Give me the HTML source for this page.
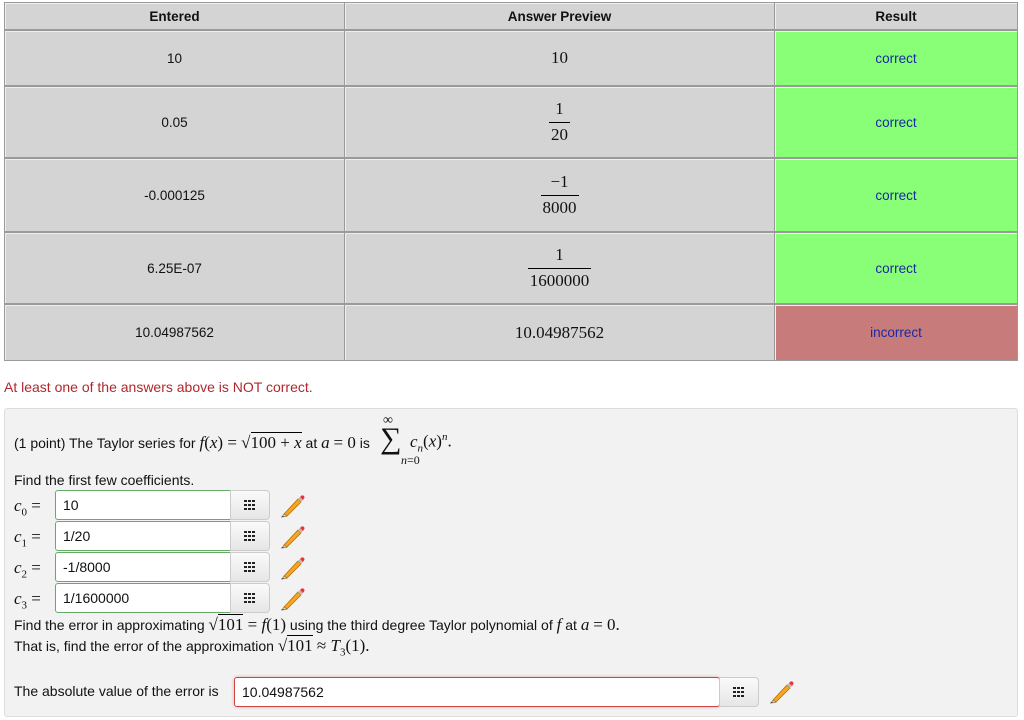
<!DOCTYPE html>
<html><head><style>
body{margin:0;width:1024px;height:720px;background:#fff;font-family:"Liberation Sans",sans-serif;font-size:13px;color:#111;position:relative;overflow:hidden}
.c{position:absolute;background:#d4d4d4;border:1px solid #9a9a9a;box-shadow:inset 1px 1px 0 #eee;box-sizing:border-box;display:flex;align-items:center;justify-content:center;text-align:center;font-size:13.5px}
.g{background:#88ff77}.r{background:#c87b7b}
.h{font-weight:bold}
.res{color:#1a2aa0}
.m{font-family:"Liberation Serif",serif;font-size:17px}
.fr{display:inline-block;text-align:center;font-family:"Liberation Serif",serif;font-size:17px}
.fr span{display:block;padding:0 2px}
.fr .n{border-bottom:1px solid #000;padding-bottom:3px;margin-bottom:2px}
.a{position:absolute;white-space:nowrap}
.in{position:absolute;left:50px;width:176px;height:30px;border:1px solid #6a6;border-radius:3px 0 0 3px;background:#fff;box-sizing:border-box;padding:6px 7px;font-size:14px}
.bt{position:absolute;left:225px;width:40px;height:30px;border:1px solid #ccc;border-radius:0 4px 4px 0;background:linear-gradient(#fafafa,#e6e6e6);box-sizing:border-box}
.grid{position:absolute;left:13px;top:9px;width:12px;height:10px;background:
repeating-linear-gradient(90deg,#222 0 3px,transparent 3px 4px);-webkit-mask:repeating-linear-gradient(#000 0 2px,transparent 2px 4px);mask:repeating-linear-gradient(#000 0 2px,transparent 2px 4px)}
.mi{font-family:"Liberation Serif",serif;font-style:italic;font-size:17px}
.t{font-size:14px}
.p{position:absolute;width:26px;height:26px}
</style></head><body>
<svg width="0" height="0" style="position:absolute"><defs>
<symbol id="pen" viewBox="0 0 26 26">
<path d="M2 24 L8 23" stroke="#999" stroke-width="1.5" opacity=".6"/>
<path d="M5 21 L19 6 L22 9 L8 23 Z" fill="#f5a623" stroke="#b86e00" stroke-width="0.8"/>
<path d="M5 21 L8 23 L3 24 Z" fill="#f3d9a8" stroke="#8a6a3a" stroke-width="0.6"/>
<path d="M3 24 L4 22.5 L4.8 23.6 Z" fill="#333"/>
<path d="M19 6 L21 4 L24 7 L22 9 Z" fill="#bbb"/>
<path d="M21 4 L22.5 2.5 Q24 2 25 3 Q26 4.5 25 5.5 L24 7 Z" fill="#e33"/>
</symbol></defs></svg>
<div class="c h" style="left:4px;top:2px;width:341px;height:28px">Entered</div>
<div class="c h" style="left:344px;top:2px;width:431px;height:28px">Answer Preview</div>
<div class="c h" style="left:774px;top:2px;width:244px;height:28px">Result</div>

<div class="c" style="left:4px;top:30px;width:341px;height:56px">10</div>
<div class="c" style="left:344px;top:30px;width:431px;height:56px"><span class="m">10</span></div>
<div class="c g res" style="left:774px;top:30px;width:244px;height:56px">correct</div>

<div class="c" style="left:4px;top:86px;width:341px;height:72px">0.05</div>
<div class="c" style="left:344px;top:86px;width:431px;height:72px"><div class="fr"><span class="n">1</span><span>20</span></div></div>
<div class="c g res" style="left:774px;top:86px;width:244px;height:72px">correct</div>

<div class="c" style="left:4px;top:158px;width:341px;height:74px">-0.000125</div>
<div class="c" style="left:344px;top:158px;width:431px;height:74px"><div class="fr"><span class="n">&minus;1</span><span>8000</span></div></div>
<div class="c g res" style="left:774px;top:158px;width:244px;height:74px">correct</div>

<div class="c" style="left:4px;top:232px;width:341px;height:72px">6.25E-07</div>
<div class="c" style="left:344px;top:232px;width:431px;height:72px"><div class="fr"><span class="n">1</span><span>1600000</span></div></div>
<div class="c g res" style="left:774px;top:232px;width:244px;height:72px">correct</div>

<div class="c" style="left:4px;top:304px;width:341px;height:57px">10.04987562</div>
<div class="c" style="left:344px;top:304px;width:431px;height:57px"><span class="m">10.04987562</span></div>
<div class="c r res" style="left:774px;top:304px;width:244px;height:57px">incorrect</div>

<div class="a" style="left:4px;top:379px;color:#b0282d;font-size:14px">At least one of the answers above is NOT correct.</div>

<div style="position:absolute;left:4px;top:408px;width:1014px;height:309px;background:#f2f2f2;border:1px solid #ddd;border-radius:3px;box-sizing:border-box">
<div class="a t" style="left:9px;top:24px">(1 point) The Taylor series for <span class="mi">f</span><span class="m">(<i>x</i>) = √<span style="border-top:1px solid #000">100 + <i>x</i></span></span> at <span class="mi">a</span> <span class="m">= 0</span> is</div>
<div class="a m" style="left:375px;top:15px;font-size:30px;line-height:30px">∑</div>
<div class="a m" style="left:405px;top:22px"><i>c<sub style="font-size:11px">n</sub></i>(<i>x</i>)<sup style="font-size:11px"><i>n</i></sup>.</div>
<div class="a m" style="left:378px;top:4px;font-size:14px">∞</div>
<div class="a mi" style="left:396px;top:44px;font-size:12px">n<span style="font-style:normal">=0</span></div>
<div class="a t" style="left:9px;top:63px">Find the first few coefficients.</div>

<div class="a mi" style="left:9px;top:87px">c<sub style="font-size:11px;font-style:normal">0</sub> <span style="font-style:normal">=</span></div>
<div class="in" style="top:81px">10</div><div class="bt" style="top:81px"><div class="grid"></div></div>
<svg class="p" style="left:274px;top:84px"><use href="#pen"/></svg>

<div class="a mi" style="left:9px;top:118px">c<sub style="font-size:11px;font-style:normal">1</sub> <span style="font-style:normal">=</span></div>
<div class="in" style="top:112px">1/20</div><div class="bt" style="top:112px"><div class="grid"></div></div>
<svg class="p" style="left:274px;top:115px"><use href="#pen"/></svg>

<div class="a mi" style="left:9px;top:149px">c<sub style="font-size:11px;font-style:normal">2</sub> <span style="font-style:normal">=</span></div>
<div class="in" style="top:143px">-1/8000</div><div class="bt" style="top:143px"><div class="grid"></div></div>
<svg class="p" style="left:274px;top:146px"><use href="#pen"/></svg>

<div class="a mi" style="left:9px;top:180px">c<sub style="font-size:11px;font-style:normal">3</sub> <span style="font-style:normal">=</span></div>
<div class="in" style="top:174px">1/1600000</div><div class="bt" style="top:174px"><div class="grid"></div></div>
<svg class="p" style="left:274px;top:177px"><use href="#pen"/></svg>

<div class="a t" style="left:9px;top:206px">Find the error in approximating <span class="m">√<span style="border-top:1px solid #000">101</span> = <i>f</i>(1)</span> using the third degree Taylor polynomial of <span class="mi">f</span> at <span class="mi">a</span> <span class="m">= 0.</span></div>
<div class="a t" style="left:9px;top:227px">That is, find the error of the approximation <span class="m">√<span style="border-top:1px solid #000">101</span> ≈ <i>T</i><sub style="font-size:11px">3</sub>(1).</span></div>

<div class="a t" style="left:9px;top:274px">The absolute value of the error is</div>
<div style="position:absolute;left:229px;top:268px;width:486px;height:30px;border:1px solid #c44;border-radius:3px;background:#fff;box-sizing:border-box;padding:6px 7px;font-size:14px;box-shadow:0 0 3px rgba(200,60,60,.4)">10.04987562</div>
<div class="bt" style="left:714px;top:268px"><div class="grid"></div></div>
<svg class="p" style="left:763px;top:270px"><use href="#pen"/></svg>
</div>
</body></html>
